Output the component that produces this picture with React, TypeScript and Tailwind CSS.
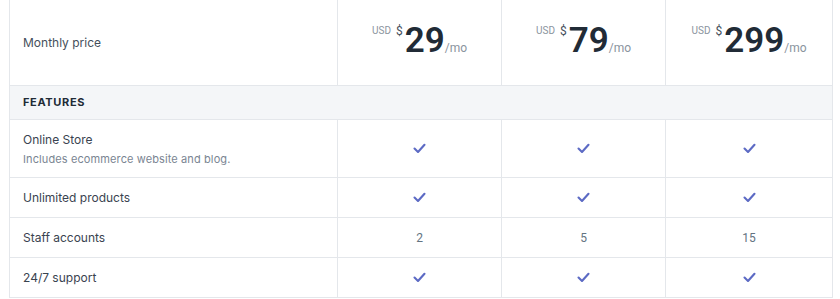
import React from "react";

const Check = () => (
  <svg width="13" height="11" viewBox="0 0 13 11" fill="none">
    <path d="M1.5 5.5 L5 9 L11.5 1.8" stroke="#5c6ac4" strokeWidth="2.1" strokeLinecap="round" strokeLinejoin="round" />
  </svg>
);

const Price = ({ v }: { v: string }) => (
  <div className="flex items-start justify-center pt-[23px]">
    <span className="mt-[3px] text-[10px] leading-none text-[#8a949e]">USD</span>
    <span className="ml-[5px] mt-[2px] text-[12px] leading-none text-[#454f5b]">$</span>
    <span className="ml-[2px] flex items-baseline">
      <span className="text-[35px] font-semibold leading-[35px] text-[#212b36]">{v}</span>
      <span className="text-[12px] text-[#8a949e]">/mo</span>
    </span>
  </div>
);

type Cell = "check" | string;

const rows: { label: string; sub?: string; cells: Cell[]; h: string }[] = [
  { label: "Online Store", sub: "Includes ecommerce website and blog.", cells: ["check", "check", "check"], h: "h-[58px]" },
  { label: "Unlimited products", cells: ["check", "check", "check"], h: "h-[40px]" },
  { label: "Staff accounts", cells: ["2", "5", "15"], h: "h-[40px]" },
  { label: "24/7 support", cells: ["check", "check", "check"], h: "h-[40px]" },
];

export default function App() {
  return (
    <div className="h-[299px] w-[840px] overflow-hidden bg-white pl-[9px]" style={{ fontFamily: "Inter, 'Noto Sans', sans-serif" }}>
      <div className="w-[824px]">
        <div className="grid h-[86px] grid-cols-[328px_164px_164px_168px] border-b border-[#e4e7eb]">
          <div className="flex items-center border-l border-[#e4e7eb] pl-[13px] text-[12px] text-[#454f5b]">Monthly price</div>
          <div className="border-l border-[#e4e7eb]" style={{ fontFamily: "Roboto, sans-serif" }}><Price v="29" /></div>
          <div className="border-l border-[#e4e7eb]" style={{ fontFamily: "Roboto, sans-serif" }}><Price v="79" /></div>
          <div className="border-x border-[#e4e7eb]" style={{ fontFamily: "Roboto, sans-serif" }}><Price v="299" /></div>
        </div>
        <div className="flex h-[34px] items-center border-x border-b border-[#e4e7eb] bg-[#f4f6f8] pl-[13px] text-[11px] font-bold tracking-[0.06em] text-[#212b36]">
          FEATURES
        </div>
        {rows.map((r) => (
          <div key={r.label} className={`grid ${r.h} grid-cols-[328px_164px_164px_168px] border-b border-[#e4e7eb]`}>
            <div className="flex flex-col justify-center border-l border-[#e4e7eb] pl-[13px]">
              <div className="text-[12px] leading-[18px] text-[#3a4350]">{r.label}</div>
              {r.sub && <div className="mt-[2px] text-[11px] leading-[16px] tracking-[0.01em] text-[#7a8592]">{r.sub}</div>}
            </div>
            {r.cells.map((c, i) => (
              <div key={i} className={`flex items-center justify-center ${i === 2 ? "border-x" : "border-l"} border-[#e4e7eb]`}>
                {c === "check" ? <Check /> : <span className="text-[12px] text-[#637381]" style={{ fontFamily: "Roboto, sans-serif" }}>{c}</span>}
              </div>
            ))}
          </div>
        ))}
      </div>
    </div>
  );
}
